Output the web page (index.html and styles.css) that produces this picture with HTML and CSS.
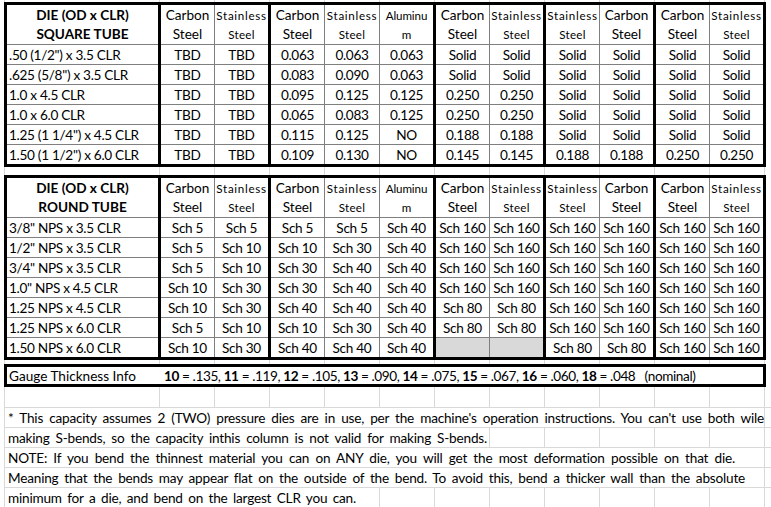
FILE: index.html
```html
<!DOCTYPE html>
<html lang="en">
<head>
<meta charset="utf-8">
<title>Die capacity chart</title>
<link rel="stylesheet" href="styles.css">
</head>
<body>
<main class="sheet">
  <table class="grid sq">
    <colgroup><col class="die"><col class="c"><col class="c"><col class="c"><col class="c"><col class="c"><col class="c"><col class="c"><col class="c"><col class="c"><col class="c"><col class="c"></colgroup>
    <tr class="hd">
      <td class="die-h"><b>DIE (OD x CLR)</b><br><b>SQUARE TUBE</b></td>
      <td>Carbon<br>Steel</td>
      <td class="sm"><span class="w1">Stainless</span><br><span class="w2">Steel</span></td>
      <td>Carbon<br>Steel</td>
      <td class="sm"><span class="w1">Stainless</span><br><span class="w2">Steel</span></td>
      <td class="sm"><span class="w3">Aluminu</span><br>m</td>
      <td>Carbon<br>Steel</td>
      <td class="sm"><span class="w1">Stainless</span><br><span class="w2">Steel</span></td>
      <td class="sm"><span class="w1">Stainless</span><br><span class="w2">Steel</span></td>
      <td>Carbon<br>Steel</td>
      <td>Carbon<br>Steel</td>
      <td class="sm"><span class="w1">Stainless</span><br><span class="w2">Steel</span></td>
    </tr>
    <tr><td>.50 (1/2") x 3.5 CLR</td><td>TBD</td><td>TBD</td><td>0.063</td><td>0.063</td><td>0.063</td><td>Solid</td><td>Solid</td><td>Solid</td><td>Solid</td><td>Solid</td><td>Solid</td></tr>
    <tr><td>.625 (5/8") x 3.5 CLR</td><td>TBD</td><td>TBD</td><td>0.083</td><td>0.090</td><td>0.063</td><td>Solid</td><td>Solid</td><td>Solid</td><td>Solid</td><td>Solid</td><td>Solid</td></tr>
    <tr><td>1.0 x 4.5 CLR</td><td>TBD</td><td>TBD</td><td>0.095</td><td>0.125</td><td>0.125</td><td>0.250</td><td>0.250</td><td>Solid</td><td>Solid</td><td>Solid</td><td>Solid</td></tr>
    <tr><td>1.0 x 6.0 CLR</td><td>TBD</td><td>TBD</td><td>0.065</td><td>0.083</td><td>0.125</td><td>0.250</td><td>0.250</td><td>Solid</td><td>Solid</td><td>Solid</td><td>Solid</td></tr>
    <tr><td>1.25 (1 1/4") x 4.5 CLR</td><td>TBD</td><td>TBD</td><td>0.115</td><td>0.125</td><td>NO</td><td>0.188</td><td>0.188</td><td>Solid</td><td>Solid</td><td>Solid</td><td>Solid</td></tr>
    <tr><td>1.50 (1 1/2") x 6.0 CLR</td><td>TBD</td><td>TBD</td><td>0.109</td><td>0.130</td><td>NO</td><td>0.145</td><td>0.145</td><td>0.188</td><td>0.188</td><td>0.250</td><td>0.250</td></tr>
  </table>

  <div class="gap-a"></div>

  <table class="grid rd">
    <colgroup><col class="die"><col class="c"><col class="c"><col class="c"><col class="c"><col class="c"><col class="c"><col class="c"><col class="c"><col class="c"><col class="c"><col class="c"></colgroup>
    <tr class="hd">
      <td class="die-h"><b>DIE (OD x CLR)</b><br><b>ROUND TUBE</b></td>
      <td>Carbon<br>Steel</td>
      <td class="sm"><span class="w1">Stainless</span><br><span class="w2">Steel</span></td>
      <td>Carbon<br>Steel</td>
      <td class="sm"><span class="w1">Stainless</span><br><span class="w2">Steel</span></td>
      <td class="sm"><span class="w3">Aluminu</span><br>m</td>
      <td>Carbon<br>Steel</td>
      <td class="sm"><span class="w1">Stainless</span><br><span class="w2">Steel</span></td>
      <td class="sm"><span class="w1">Stainless</span><br><span class="w2">Steel</span></td>
      <td>Carbon<br>Steel</td>
      <td>Carbon<br>Steel</td>
      <td class="sm"><span class="w1">Stainless</span><br><span class="w2">Steel</span></td>
    </tr>
    <tr><td>3/8" NPS x 3.5 CLR</td><td>Sch 5</td><td>Sch 5</td><td>Sch 5</td><td>Sch 5</td><td>Sch 40</td><td>Sch 160</td><td>Sch 160</td><td>Sch 160</td><td>Sch 160</td><td>Sch 160</td><td>Sch 160</td></tr>
    <tr><td>1/2" NPS x 3.5 CLR</td><td>Sch 5</td><td>Sch 10</td><td>Sch 10</td><td>Sch 30</td><td>Sch 40</td><td>Sch 160</td><td>Sch 160</td><td>Sch 160</td><td>Sch 160</td><td>Sch 160</td><td>Sch 160</td></tr>
    <tr><td>3/4" NPS x 3.5 CLR</td><td>Sch 5</td><td>Sch 10</td><td>Sch 30</td><td>Sch 40</td><td>Sch 40</td><td>Sch 160</td><td>Sch 160</td><td>Sch 160</td><td>Sch 160</td><td>Sch 160</td><td>Sch 160</td></tr>
    <tr><td>1.0" NPS x 4.5 CLR</td><td>Sch 10</td><td>Sch 30</td><td>Sch 30</td><td>Sch 40</td><td>Sch 40</td><td>Sch 160</td><td>Sch 160</td><td>Sch 160</td><td>Sch 160</td><td>Sch 160</td><td>Sch 160</td></tr>
    <tr><td>1.25 NPS x 4.5 CLR</td><td>Sch 10</td><td>Sch 30</td><td>Sch 40</td><td>Sch 40</td><td>Sch 40</td><td>Sch 80</td><td>Sch 80</td><td>Sch 160</td><td>Sch 160</td><td>Sch 160</td><td>Sch 160</td></tr>
    <tr><td>1.25 NPS x 6.0 CLR</td><td>Sch 5</td><td>Sch 10</td><td>Sch 10</td><td>Sch 30</td><td>Sch 40</td><td>Sch 80</td><td>Sch 80</td><td>Sch 160</td><td>Sch 160</td><td>Sch 160</td><td>Sch 160</td></tr>
    <tr><td>1.50 NPS x 6.0 CLR</td><td>Sch 10</td><td>Sch 30</td><td>Sch 40</td><td>Sch 40</td><td>Sch 40</td><td class="na"></td><td class="na"></td><td>Sch 80</td><td>Sch 80</td><td>Sch 160</td><td>Sch 160</td></tr>
  </table>

  <div class="gap-b"></div>

  <div class="gauge">
    <span class="g-label">Gauge Thickness Info</span>
    <span class="g-vals"><b>10</b> = .135, <b>11</b> = .119, <b>12</b> = .105, <b>13</b> = .090, <b>14</b> = .075, <b>15</b> = .067, <b>16</b> = .060, <b>18</b> = .048&nbsp;&nbsp; (nominal)</span>
  </div>

  <div class="gap-c"></div>

  <div class="notes">
    <div class="nrow"><span class="ntext l1">* This capacity assumes 2 (TWO) pressure dies are in use, per the machine's operation instructions. You can't use both wile</span></div>
    <div class="nrow"><span class="ntext l2">making S-bends, so the capacity inthis column is not valid for making S-bends.</span></div>
    <div class="nrow"><span class="ntext l3">NOTE: If you bend the thinnest material you can on ANY die, you will get the most deformation possible on that die.</span></div>
    <div class="nrow"><span class="ntext l4">Meaning that the bends may appear flat on the outside of the bend. To avoid this, bend a thicker wall than the absolute</span></div>
    <div class="nrow"><span class="ntext l5">minimum for a die, and bend on the largest CLR you can.</span></div>
    <div class="nrow"></div>
  </div>
</main>
</body>
</html>
```

FILE: styles.css
```css
html, body {
  margin: 0;
  padding: 0;
}

body {
  width: 771px;
  height: 507px;
  overflow: hidden;
  font-family: Lato, "Liberation Sans", sans-serif;
  font-size: 13.6px;
  color: #000;
  background-color: #fff;
  background-image:
    linear-gradient(to right, #fff 0, #fff 4px, #d9d9d9 4px, #d9d9d9 5px, #fff 5px, #fff 159px, transparent 159px),
    linear-gradient(to right, #d9d9d9 0, #d9d9d9 1px, transparent 1px);
  background-size: 100% 100%, 55px 100%;
  background-repeat: no-repeat, repeat-x;
  background-position: 0 0, 159px 0;
}

.sheet {
  display: flex;
  flex-direction: column;
  padding: 2px 0 0 4px;
}

.grid {
  border-collapse: collapse;
  table-layout: fixed;
  width: 759px;
  border: 3px solid #000;
  background: #fff;
}

.grid col.die { width: 154px; }
.grid col.c { width: 55px; }

.grid td {
  border: 1px solid #7f7f7f;
  padding: 0;
  height: 19px;
  line-height: 18px;
  text-align: center;
  vertical-align: middle;
  white-space: nowrap;
  overflow: hidden;
  letter-spacing: -0.3px;
}

.grid td:first-child {
  text-align: left;
  padding-left: 2px;
}

.grid td:nth-child(1),
.grid td:nth-child(3),
.grid td:nth-child(6),
.grid td:nth-child(8),
.grid td:nth-child(10) {
  border-right: 3px solid #000;
}

.grid tr.hd td {
  line-height: 19px;
  padding-top: 1px;
  letter-spacing: 0;
}

.sq tr.hd td { height: 35px; }
.rd tr.hd td { height: 38px; }

.grid tr.hd td.die-h {
  text-align: center;
  padding-left: 0;
}

.grid td.sm {
  font-size: 11.6px;
}

.w1 { letter-spacing: 0.7px; }
.w2 { letter-spacing: 0.3px; }
.w3 { letter-spacing: -0.1px; }

.grid td.na {
  background: #d9d9d9;
}

.gap-a { height: 8px; }
.gap-b { height: 4px; }

.gauge {
  display: flex;
  align-items: center;
  box-sizing: border-box;
  width: 762px;
  height: 23px;
  border: 3px solid #000;
  background: #fff;
  font-size: 13.6px;
}

.g-label {
  width: 155px;
  padding-left: 2px;
  box-sizing: border-box;
  flex: none;
}

.g-vals {
  white-space: nowrap;
  padding-left: 2px;
  letter-spacing: -0.4px;
}

.gap-c { height: 20px; border-bottom: 1px solid #d9d9d9; }

.notes {
  display: flex;
  flex-direction: column;
}

.nrow {
  height: 19px;
  border-bottom: 1px solid #d9d9d9;
  padding-left: 2px;
}

.ntext {
  display: inline-block;
  box-sizing: border-box;
  height: 19px;
  line-height: 20px;
  padding-left: 2px;
  background: #fff;
  white-space: nowrap;
  font-size: 13.6px;
  letter-spacing: -0.2px;
  text-align: left;
  text-align-last: justify;
}

.l1 { width: 758px; }
.l2 { width: 481px; }
.l3 { width: 729px; }
.l4 { width: 739px; }
.l5 { width: 350px; }
```
